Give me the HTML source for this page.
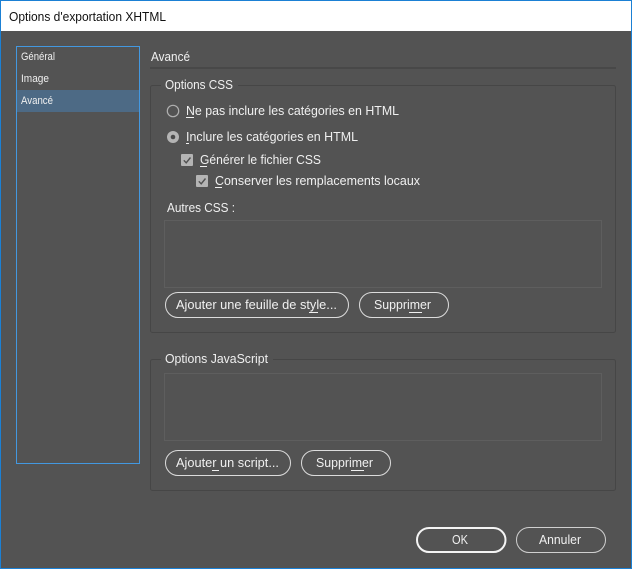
<!DOCTYPE html>
<html lang="fr"><head><meta charset="utf-8"><title>Options d'exportation XHTML</title>
<style>
html,body{margin:0;padding:0;width:632px;height:569px;overflow:hidden;background:#535353}
svg{display:block;position:absolute;left:0;top:0}
text{font-family:"Liberation Sans",sans-serif;font-size:13px;fill:#f0f0f0}
.s{font-size:11px}
</style></head><body>
<svg width="632" height="569" viewBox="0 0 632 569" xmlns="http://www.w3.org/2000/svg">
<rect width="632" height="569" fill="#535353"/>
<rect x="1" y="1" width="630" height="30" fill="#fff"/>
<rect x=".5" y=".5" width="631" height="568" fill="none" stroke="#1b80d4"/>
<text x="9" y="21" style="fill:#111;font-size:13px" textLength="157" lengthAdjust="spacingAndGlyphs">Options d'exportation XHTML</text>

<rect x="16.500" y="46.500" width="123" height="417" fill="none" stroke="#4398e0"/>
<rect x="17" y="90" width="122" height="22" fill="#4d6a85"/>
<text class="s" x="21" y="60" textLength="34" lengthAdjust="spacingAndGlyphs">Général</text>
<text class="s" x="21" y="82" textLength="28" lengthAdjust="spacingAndGlyphs">Image</text>
<text class="s" x="21" y="104" textLength="32" lengthAdjust="spacingAndGlyphs">Avancé</text>

<text x="151" y="61" textLength="39" lengthAdjust="spacingAndGlyphs">Avancé</text>
<rect x="150" y="67" width="466" height="2" fill="#484848"/>

<rect x="150.500" y="85.500" width="465" height="247" rx="2" fill="none" stroke="#464646"/>
<rect x="161" y="83" width="77" height="5" fill="#535353"/>
<text x="165" y="89" textLength="68" lengthAdjust="spacingAndGlyphs">Options CSS</text>

<circle cx="173" cy="111" r="5.700" fill="none" stroke="#b0b0b0" stroke-width="1.200"/>
<text x="186" y="115" textLength="213" lengthAdjust="spacingAndGlyphs">Ne pas inclure les catégories en HTML</text>
<rect x="186" y="117" width="8" height="1" fill="#f0f0f0"/>

<circle cx="173" cy="137" r="6" fill="#b4b4b4"/>
<circle cx="173" cy="137" r="2.300" fill="#4a4a4a"/>
<text x="186" y="141" textLength="172" lengthAdjust="spacingAndGlyphs">Inclure les catégories en HTML</text>
<rect x="186" y="143" width="3" height="1" fill="#f0f0f0"/>

<rect x="181" y="154" width="12" height="12" rx="1" fill="#b4b4b4"/>
<path d="M183.800 160.300 L186.200 162.800 L190.500 157.500" fill="none" stroke="#505050" stroke-width="1.400"/>
<text x="200" y="164" textLength="121" lengthAdjust="spacingAndGlyphs">Générer le fichier CSS</text>
<rect x="200" y="166" width="7" height="1" fill="#f0f0f0"/>

<rect x="196" y="175" width="12" height="12" rx="1" fill="#b4b4b4"/>
<path d="M198.800 181.300 L201.200 183.800 L205.500 178.500" fill="none" stroke="#505050" stroke-width="1.400"/>
<text x="215" y="185" textLength="205" lengthAdjust="spacingAndGlyphs">Conserver les remplacements locaux</text>
<rect x="215" y="187" width="7" height="1" fill="#f0f0f0"/>

<text x="167" y="212" textLength="68" lengthAdjust="spacingAndGlyphs">Autres CSS :</text>
<rect x="164.500" y="220.500" width="437" height="67" fill="none" stroke="#5e5e5e"/>

<rect x="165.500" y="292.500" width="183" height="25" rx="12.500" fill="none" stroke="#dcdcdc"/>
<text x="176" y="309" textLength="161" lengthAdjust="spacingAndGlyphs">Ajouter une feuille de style...</text>
<rect x="309" y="312" width="9" height="1" fill="#f0f0f0"/>
<rect x="359.500" y="292.500" width="89" height="25" rx="12.500" fill="none" stroke="#dcdcdc"/>
<text x="374" y="309" textLength="57" lengthAdjust="spacingAndGlyphs">Supprimer</text>
<rect x="409" y="312" width="13" height="1" fill="#f0f0f0"/>

<rect x="150.500" y="359.500" width="465" height="131" rx="2" fill="none" stroke="#464646"/>
<rect x="161" y="357" width="112" height="5" fill="#535353"/>
<text x="165" y="363" textLength="103" lengthAdjust="spacingAndGlyphs">Options JavaScript</text>
<rect x="164.500" y="373.500" width="437" height="67" fill="none" stroke="#5e5e5e"/>

<rect x="165.500" y="450.500" width="125" height="25" rx="12.500" fill="none" stroke="#dcdcdc"/>
<text x="176" y="467" textLength="103" lengthAdjust="spacingAndGlyphs">Ajouter un script...</text>
<rect x="212" y="470" width="7" height="1" fill="#f0f0f0"/>
<rect x="301.500" y="450.500" width="89" height="25" rx="12.500" fill="none" stroke="#dcdcdc"/>
<text x="316" y="467" textLength="57" lengthAdjust="spacingAndGlyphs">Supprimer</text>
<rect x="351" y="470" width="13" height="1" fill="#f0f0f0"/>

<rect x="417" y="528" width="88.500" height="24" rx="12" fill="none" stroke="#f4f4f4" stroke-width="2"/>
<text x="452" y="544" textLength="16" lengthAdjust="spacingAndGlyphs">OK</text>
<rect x="516.500" y="527.500" width="89" height="25" rx="12.500" fill="none" stroke="#d0d0d0"/>
<text x="539" y="544" textLength="42" lengthAdjust="spacingAndGlyphs">Annuler</text>
</svg>
</body></html>
